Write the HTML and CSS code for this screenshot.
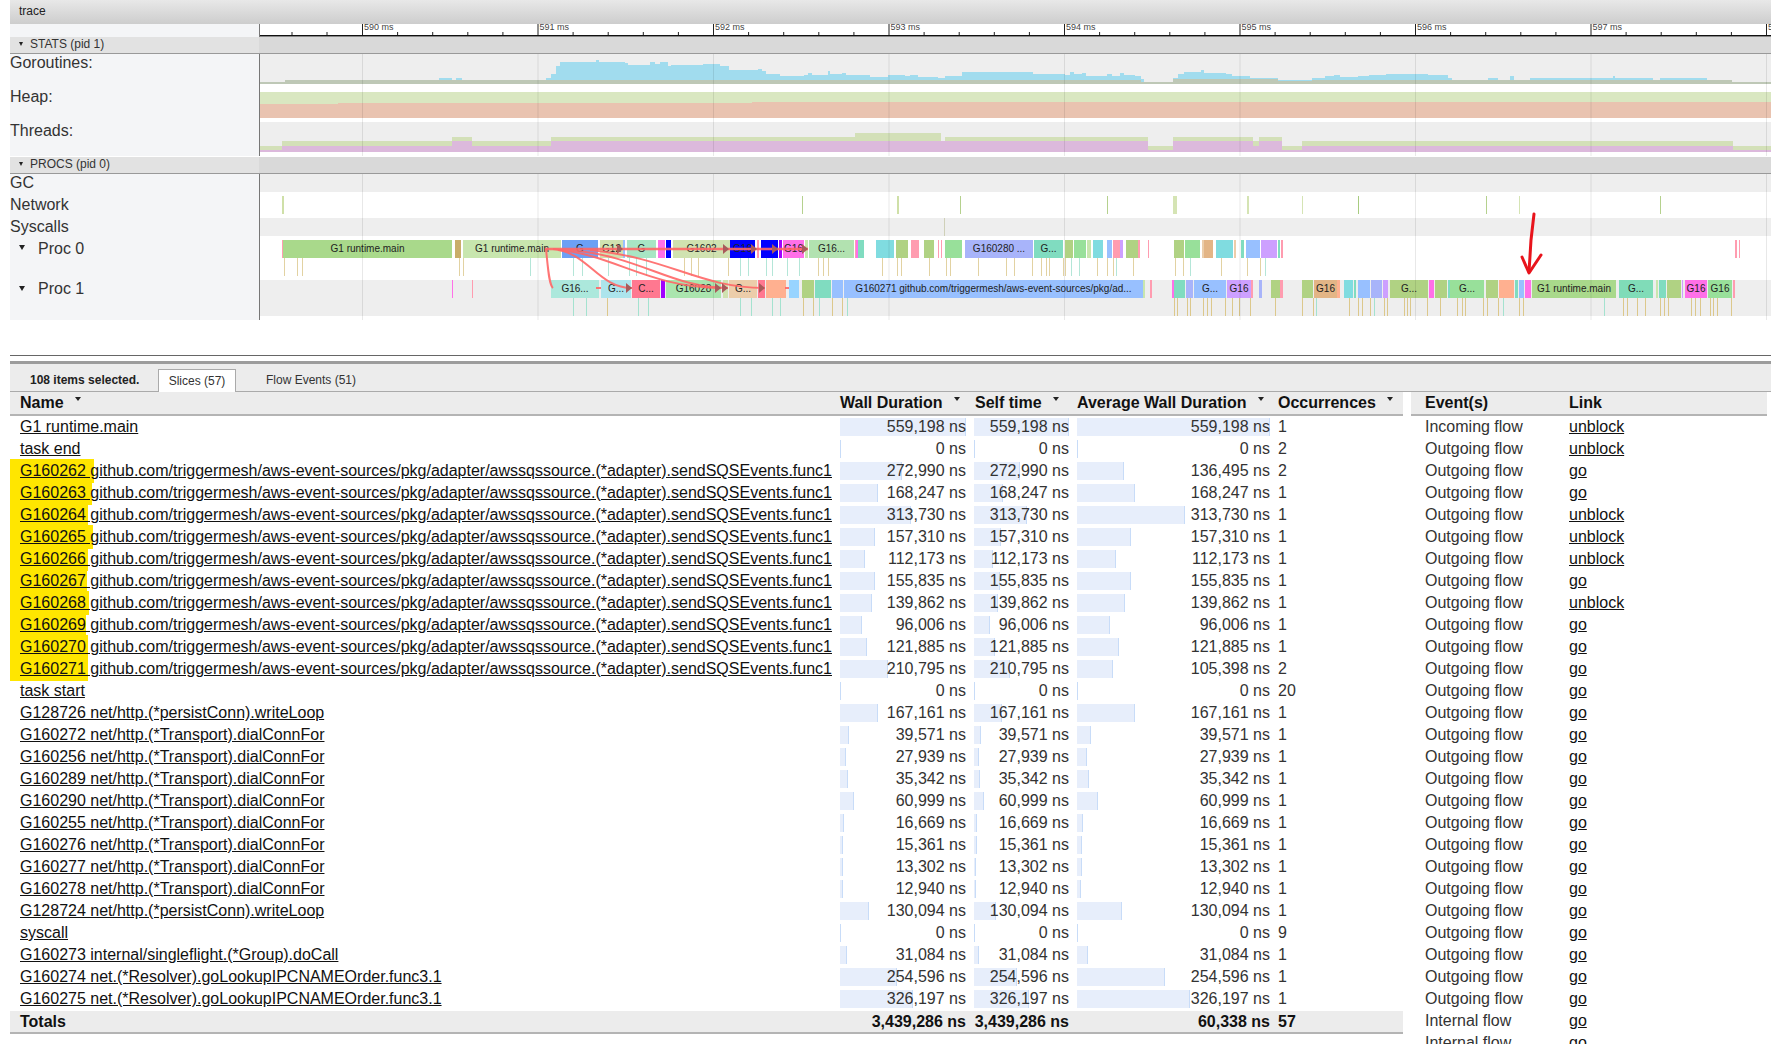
FILE: index.html

```html
<!DOCTYPE html>
<html lang="en">
<head>
  <meta charset="UTF-8">
  <title>trace</title>
  <link rel="stylesheet" href="styles.css">
</head>
<body>

  <div class="trace">
    <div class="title-bar">trace</div>

    <div class="track ruler">
      <div class="track-label"></div>
      <svg class="track-canvas" id="ruler" viewBox="260 24 1511 13"></svg>
    </div>

    <div class="group-head"><span class="arrow-small"></span>STATS (pid 1)</div>
    <div class="track goroutines">
      <div class="track-label">Goroutines:</div>
      <svg class="track-canvas" id="goroutines" viewBox="260 54 1511 38"></svg>
    </div>
    <div class="track heap">
      <div class="track-label">Heap:</div>
      <svg class="track-canvas" id="heap" viewBox="260 92 1511 30"></svg>
    </div>
    <div class="track threads">
      <div class="track-label">Threads:</div>
      <svg class="track-canvas" id="threads" viewBox="260 122 1511 34"></svg>
    </div>

    <div class="group-head procs"><span class="arrow-small"></span>PROCS (pid 0)</div>
    <div class="track gc">
      <div class="track-label">GC</div>
      <svg class="track-canvas" id="gc" viewBox="260 174 1511 18"></svg>
    </div>
    <div class="track network">
      <div class="track-label">Network</div>
      <svg class="track-canvas" id="network" viewBox="260 192 1511 26"></svg>
    </div>
    <div class="track syscalls">
      <div class="track-label">Syscalls</div>
      <svg class="track-canvas" id="syscalls" viewBox="260 218 1511 18"></svg>
    </div>
    <div class="track proc0">
      <div class="track-label proc-label"><span class="arrow"></span>Proc 0</div>
      <svg class="track-canvas" id="proc0" viewBox="260 236 1511 44"></svg>
    </div>
    <div class="track proc1">
      <div class="track-label proc-label"><span class="arrow"></span>Proc 1</div>
      <svg class="track-canvas" id="proc1" viewBox="260 280 1511 40"></svg>
    </div>

    <svg class="overlay" id="overlay" viewBox="0 0 1771 320"></svg>
  </div>

  <div class="divider"></div>

  <div class="details">
    <div class="tabs">
      <span class="selected-count">108 items selected.</span>
      <span class="tab active">Slices (57)</span>
      <span class="tab">Flow Events (51)</span>
    </div>

    <div class="tables">
      <table class="slices">
        <thead>
          <tr>
            <th class="name-col">Name<span class="sort"></span></th>
            <th class="wall-col">Wall Duration<span class="sort"></span></th>
            <th class="self-col">Self time<span class="sort"></span></th>
            <th class="avg-col">Average Wall Duration<span class="sort"></span></th>
            <th class="occ-col">Occurrences<span class="sort"></span></th>
          </tr>
        </thead>
        <tbody id="sliceRows"></tbody>
        <tfoot>
          <tr>
            <td class="name-col">Totals</td>
            <td class="num-total">3,439,286 ns</td>
            <td class="num-total">3,439,286 ns</td>
            <td class="num-total">60,338 ns</td>
            <td class="occ-col">57</td>
          </tr>
        </tfoot>
      </table>

      <table class="events">
        <thead>
          <tr>
            <th class="event-col">Event(s)</th>
            <th>Link</th>
          </tr>
        </thead>
        <tbody id="eventRows"></tbody>
      </table>
    </div>
  </div>

  <script src="script.js"></script>
</body>
</html>
```

FILE: styles.css

```css
html, body {
  height: 100%;
  margin: 0;
  padding: 0;
  overflow: hidden;
  font-family: "Liberation Sans", Arial, sans-serif;
  background: white;
  color: #222;
}

.trace {
  position: relative;
  height: 320px;
  margin-left: 10px;
}

.title-bar {
  height: 24px;
  padding-left: 9px;
  line-height: 23px;
  font-size: 12px;
  background: linear-gradient(#e8e8e8, #cdcdcd);
}

.track {
  display: flex;
}

.track-label {
  flex: none;
  width: 249px;
  background: #f4f5f7;
  border-right: 1px solid #777;
  font-size: 16px;
  line-height: 18px;
  color: #333;
}

.track-canvas {
  display: block;
  width: 1511px;
  height: 100%;
}

#ruler {
  overflow: visible;
}

.ruler { height: 13px; }
.goroutines { height: 38px; }
.heap { height: 30px; }
.threads { height: 34px; }
.gc { height: 18px; }
.network { height: 26px; }
.syscalls { height: 18px; }
.proc0 { height: 44px; }
.proc1 { height: 40px; }

.heap .track-label { line-height: 10px; }
.threads .track-label { line-height: 18px; }
.gc .track-label { line-height: 18px; }
.network .track-label { line-height: 26px; }
.syscalls .track-label { line-height: 18px; }

.proc-label {
  display: flex;
  align-items: flex-start;
  width: 240px;
  padding-left: 9px;
  line-height: 26px;
}

.proc1 .proc-label { line-height: 18px; }

.arrow {
  width: 0;
  height: 0;
  margin: 9px 13px 0 0;
  border-left: 3px solid transparent;
  border-right: 3px solid transparent;
  border-top: 5px solid #222;
}

.proc1 .arrow { margin-top: 6px; }

.group-head {
  display: flex;
  align-items: center;
  height: 14px;
  padding: 0 0 2px 9px;
  border-bottom: 1px solid #999;
  font-size: 12px;
  color: #333;
  background: linear-gradient(to right, #e2e2e2 249px, #d9d9d9 249px);
}

.procs {
  margin-top: 1px;
}

.arrow-small {
  width: 0;
  height: 0;
  margin-right: 7px;
  border-left: 2px solid transparent;
  border-right: 2px solid transparent;
  border-top: 4px solid #222;
}

.overlay {
  position: absolute;
  top: 0;
  left: -10px;
  width: 1771px;
  height: 320px;
  pointer-events: none;
}

.divider {
  height: 5px;
  margin: 35px 0 0 10px;
  border-top: 1px solid #666;
  border-bottom: 3px solid #9c9c9c;
}

.details {
  margin-left: 10px;
}

.tabs {
  display: flex;
  align-items: center;
  height: 27px;
  background: #ececec;
  border-bottom: 1px solid #aaa;
  font-size: 12px;
}

.selected-count {
  width: 128px;
  padding-left: 20px;
  padding-top: 4px;
  font-weight: bold;
}

.tab {
  padding-top: 4px;
  color: #333;
  white-space: nowrap;
}

.tab.active {
  align-self: flex-end;
  width: 76px;
  height: 22px;
  margin: 0 30px -1px 0;
  padding: 0;
  line-height: 23px;
  text-align: center;
  background: white;
  border: 1px solid #aaa;
  border-bottom: none;
}

.tables {
  display: flex;
  gap: 8px;
  align-items: flex-start;
}

table {
  border-collapse: collapse;
  table-layout: fixed;
  font-size: 16px;
}

.slices { width: 1393px; }
.events { width: 356px; }

th {
  height: 22px;
  padding: 0;
  text-align: left;
  background: #ececec;
  border-bottom: 2px solid #b4b4b4;
  color: #111;
}

td {
  height: 22px;
  padding: 0;
  white-space: nowrap;
  color: #333;
}

td a {
  color: #111;
}

.name-col { width: 820px; padding-left: 10px; }
.wall-col { width: 134px; }
.self-col { width: 102px; padding-left: 1px; }
.avg-col { width: 201px; }
.occ-col { width: 125px; }

.event-col { width: 144px; padding-left: 14px; }
.event-cell { padding-left: 14px; }

.sort {
  display: inline-block;
  width: 0;
  height: 0;
  margin-left: 11px;
  border-left: 3px solid transparent;
  border-right: 3px solid transparent;
  border-top: 4px solid #222;
  vertical-align: 7px;
}

.num {
  position: relative;
  height: 22px;
  line-height: 22px;
  margin-right: 8px;
  text-align: right;
}

.bar {
  position: absolute;
  top: 2px;
  left: 0;
  height: 18px;
  box-sizing: border-box;
  background: #e7eefb;
  border-right: 1px solid #c8dcf8;
}

.num-text {
  position: relative;
}

.marked {
  position: relative;
}

.mark {
  position: absolute;
  top: -1px;
  left: 0;
  height: 24px;
  background: #ffe600;
}

.name-link {
  position: relative;
}

tfoot td {
  height: 21px;
  font-weight: bold;
  color: #111;
  background: #ececec;
  border-top: 1px solid white;
  border-bottom: 2px solid #b4b4b4;
}

.num-total {
  padding-right: 8px;
  text-align: right;
}
```

FILE: script.js

```js
const GRID = [362, 537.5, 713, 888.5, 1064, 1239.5, 1415, 1590.5, 1766];

const OLIVE = "#b0d283", GREEN = "#98e09a", MAIN = "#a9d98b", PALE = "#c8e6ae", SAGE = "#d0e2b0";
const BLUE = "#98c0ff", INDIGO = "#a8b4fa", LILAC = "#cda0ff", PURE = "#0000ff", ROYAL = "#6ca0f5";
const CYAN = "#80dce0", TEAL = "#80dcc0", MINT = "#a8e5c4", PINK = "#ff9cb0", MAGENTA = "#ff70e8";
const ROSE = "#ff7890", SALMON = "#ffb090", ORANGE = "#e3b586", SAND = "#eccdaa", VIOLET = "#a000ff";

const proc0Slices = [
  [282, 283, PINK], [283, 452, MAIN, "G1 runtime.main"], [455, 461, "#c9ad6a"], [463, 561, PALE, "G1 runtime.main"],
  [562, 598, ROYAL, "G"], [600, 623, SAGE, "G12"], [623, 625, BLUE], [627, 656, MINT, "G"], [658, 665, MAGENTA],
  [666, 671, PURE], [673, 730, SAGE, "G1602"], [730, 755, PURE, "G16"], [757, 759, PINK], [761, 778, PURE],
  [779, 782, VIOLET], [783, 804, MAGENTA, "G16"], [805, 808, PALE], [809, 854, "#b2e2b0", "G16..."], [855, 856, PINK],
  [856, 858, MAGENTA], [858, 864, TEAL], [876, 894, CYAN], [896, 908, OLIVE], [911, 919, PINK], [924, 934, OLIVE],
  [938, 939, PINK], [941, 942, PINK], [945, 962, GREEN], [965, 1033, INDIGO, "G160280 ..."], [1034, 1063, TEAL, "G..."],
  [1065, 1073, OLIVE], [1074, 1086, GREEN], [1087, 1091, PALE], [1093, 1103, CYAN], [1107, 1112, BLUE], [1113, 1120, PINK],
  [1120, 1123, LILAC], [1126, 1138, OLIVE], [1138, 1140, PINK], [1148, 1149, PINK], [1174, 1184, OLIVE], [1185, 1200, GREEN],
  [1202, 1204, SAND], [1204, 1213, ORANGE], [1216, 1233, CYAN], [1234, 1236, SAND], [1241, 1244, TEAL], [1246, 1260, BLUE],
  [1261, 1277, LILAC], [1278, 1280, TEAL], [1281, 1283, PINK], [1735, 1737, PINK], [1739, 1740, PINK]
];

const proc1Slices = [
  [452, 453, MAGENTA], [472, 473, PINK], [551, 599, "#ace8dc", "G16..."], [601, 631, "#ace4ec", "G..."], [632, 660, ROSE, "C..."],
  [661, 665, VIOLET], [666, 721, "#aae5ae", "G16028"], [723, 728, SAGE], [729, 757, SAND, "G..."], [758, 765, ROSE],
  [766, 786, SALMON], [789, 799, "#98d4ff"], [802, 814, OLIVE], [815, 831, TEAL], [832, 843, BLUE],
  [844, 1143, BLUE, "G160271 github.com/triggermesh/aws-event-sources/pkg/ad..."], [1143, 1145, PALE], [1150, 1152, PINK],
  [1172, 1174, MAGENTA], [1174, 1185, TEAL], [1186, 1193, INDIGO], [1194, 1226, BLUE, "G..."], [1227, 1251, LILAC, "G16"],
  [1251, 1253, PINK], [1259, 1262, INDIGO], [1271, 1280, OLIVE], [1280, 1283, PINK], [1302, 1313, OLIVE], [1314, 1337, ORANGE, "G16"],
  [1337, 1340, SALMON], [1344, 1353, CYAN], [1354, 1356, TEAL], [1358, 1370, BLUE], [1371, 1382, INDIGO], [1383, 1388, LILAC],
  [1390, 1428, OLIVE, "G..."], [1429, 1434, MAGENTA], [1435, 1447, OLIVE], [1448, 1450, TEAL], [1450, 1484, GREEN, "G..."],
  [1486, 1498, OLIVE], [1499, 1514, SALMON], [1515, 1518, TEAL], [1519, 1524, BLUE], [1525, 1531, MAGENTA], [1532, 1616, MAIN, "G1 runtime.main"],
  [1619, 1653, "#80dcb8", "G..."], [1656, 1658, PALE], [1659, 1666, TEAL], [1667, 1681, OLIVE], [1682, 1683, LILAC],
  [1685, 1707, MAGENTA, "G16"], [1708, 1732, GREEN, "G16"], [1733, 1735, PINK]
];

// tan ticks first, teal ones second
const proc0TicksTan = [284, 297, 302, 459, 463, 684, 691, 698, 728, 818, 823, 828, 882, 897, 901, 929, 946, 950, 978, 1006, 1014, 1032, 1041, 1046, 1049, 1063, 1065, 1097, 1107, 1113, 1133, 1175, 1183, 1221, 1247, 1260];
const proc0TicksTeal = [530, 573, 582, 608, 629, 636, 646, 740, 748, 766, 772, 787, 799, 1071, 1079, 1116, 1190, 1265];
const proc1TicksTan = [607, 803, 813, 832, 842, 1174, 1177, 1187, 1190, 1203, 1207, 1211, 1225, 1232, 1239, 1250, 1275, 1302, 1313, 1349, 1358, 1362, 1370, 1384, 1387, 1404, 1407, 1410, 1427, 1440, 1457, 1462, 1465, 1483, 1487, 1498, 1519, 1523, 1623, 1627, 1637, 1645, 1660, 1664, 1668, 1691, 1695, 1700, 1710, 1713, 1717, 1731];
const proc1TicksTeal = [573, 586, 638, 648, 740, 751, 772, 780, 819, 847, 1316, 1374, 1503, 1604];

const blueSteps = [[260, 82], [439, 78], [452, 80], [456, 78], [462, 80], [546, 78], [551, 74], [556, 66], [560, 62], [596, 60], [599, 62], [625, 63], [628, 65], [650, 62], [655, 64], [660, 62], [668, 66], [671, 65], [703, 64], [720, 66], [729, 70], [758, 69], [762, 71], [766, 74], [780, 76], [804, 75], [808, 73], [812, 75], [828, 71], [830, 74], [842, 73], [846, 75], [860, 75], [870, 77], [888, 75], [905, 76], [910, 75], [918, 77], [938, 78], [945, 76], [962, 72], [1033, 74], [1065, 75], [1070, 72], [1074, 74], [1082, 73], [1086, 76], [1107, 74], [1112, 76], [1120, 73], [1124, 75], [1135, 76], [1141, 79], [1144, 82], [1173, 78], [1178, 74], [1184, 72], [1201, 70], [1204, 73], [1226, 74], [1232, 76], [1250, 78], [1278, 80], [1312, 78], [1325, 76], [1334, 75], [1340, 77], [1358, 76], [1369, 75], [1386, 74], [1428, 75], [1448, 78], [1452, 80], [1488, 78], [1498, 80], [1510, 76], [1514, 80], [1530, 78], [1613, 76], [1615, 78], [1653, 80], [1660, 78], [1704, 78], [1707, 80], [1732, 82]];
const oliveSteps = [[260, 82], [285, 80], [1141, 82], [1173, 79], [1278, 81], [1312, 80], [1732, 82]];
const heapGreen = [[260, 92]];
const heapOrange = [[260, 104], [338, 103], [752, 102]];
const threadsGreen = [[260, 146], [282, 141], [452, 137], [472, 141], [551, 137], [855, 133], [941, 141], [945, 137], [1148, 146], [1173, 137], [1253, 141], [1259, 137], [1282, 146], [1302, 141], [1733, 146]];
const threadsPurple = [[260, 150], [282, 146], [452, 141], [472, 146], [551, 141], [1148, 150], [1173, 141], [1253, 146], [1259, 141], [1282, 150], [1302, 146], [1733, 150]];

// [x, width, color]
const networkTicks = [[282, 2, "#cfe0a8"], [802, 1, "#b5d18e"], [897, 2, "#cfe0a8"], [960, 1, "#b5d18e"], [1107, 1, "#b5d18e"], [1173, 4, "#d5e4b4"], [1247, 2, "#d5e4b4"], [1302, 1, "#d5e4b4"], [1358, 1, "#a8cc80"], [1486, 1, "#b5d18e"], [1519, 1, "#d5e4b4"], [1660, 1, "#b5d18e"]];

function rect(x, y, w, h, fill) {
  return `<rect x="${x}" y="${y}" width="${w}" height="${h}" fill="${fill}"/>`;
}

function stepPath(steps, base, fill) {
  let d = `M${steps[0][0]} ${base}`;
  steps.forEach((s, i) => {
    const next = i + 1 < steps.length ? steps[i + 1][0] : 1771;
    d += `L${s[0]} ${s[1]}L${next} ${s[1]}`;
  });
  return `<path d="${d}L1771 ${base}Z" fill="${fill}"/>`;
}

function gridLines(y, h) {
  return GRID.map(x => rect(x, y, 1, h, "rgba(0,0,0,0.09)")).join("");
}

function drawSlices(slices, y) {
  return slices.map(s => {
    let out = rect(s[0], y, s[1] - s[0], 18, s[2]);
    if (s[3]) {
      out += `<text x="${(s[0] + s[1]) / 2}" y="${y + 12}" text-anchor="middle" font-size="10" fill="#222">${s[3]}</text>`;
    }
    return out;
  }).join("");
}

function ticks(list, y, color) {
  return list.map(x => rect(x, y, 1, 18, color)).join("");
}

function setTrack(id, inner) {
  document.getElementById(id).innerHTML = inner;
}

// ruler
let rulerSvg = rect(291.5, 32, 1, 3, "#222") + rect(326.5, 32, 1, 3, "#222");
GRID.forEach((x, i) => {
  rulerSvg += rect(x, 24, 1, 11, "#222");
  rulerSvg += `<text x="${x + 2}" y="30" font-size="9" fill="#444">${590 + i} ms</text>`;
  for (let m = 1; m <= 4; m++) {
    rulerSvg += rect(x + m * 35.1, 32, 1, 3, "#222");
  }
});
rulerSvg += rect(260, 35, 1511, 1.5, "#111");
setTrack("ruler", rulerSvg);

setTrack("goroutines", rect(260, 54, 1511, 30, "#eeeeee") + stepPath(blueSteps, 84, "#a1dcee") + stepPath(oliveSteps, 84, "#bec8b6") + gridLines(54, 38));
setTrack("heap", stepPath(heapGreen, 118, "#d9e7c1") + stepPath(heapOrange, 118, "#e9c3b0") + gridLines(92, 30));
setTrack("threads", rect(260, 122, 1511, 30, "#eeeeee") + stepPath(threadsGreen, 152, "#d3e0b8") + stepPath(threadsPurple, 152, "#dcb9dc") + gridLines(122, 34));
setTrack("gc", rect(260, 174, 1511, 18, "#eeeeee") + gridLines(174, 18));
setTrack("network", networkTicks.map(t => rect(t[0], 196, t[1], 18, t[2])).join("") + gridLines(192, 26));
setTrack("syscalls", rect(260, 218, 1511, 18, "#eeeeee") + rect(944, 218, 1, 18, "#cfd0b8") + gridLines(218, 18));
setTrack("proc0", drawSlices(proc0Slices, 240) + ticks(proc0TicksTan, 258, "#e2d2a2") + ticks(proc0TicksTeal, 258, "#b4e6d8") + gridLines(236, 44));
setTrack("proc1", rect(260, 280, 1511, 36, "#eeeeee") + drawSlices(proc1Slices, 280) + ticks(proc1TicksTan, 298, "#dcc88c") + ticks(proc1TicksTeal, 298, "#a4e2cf") + gridLines(280, 40));

// flow arrows and the hand drawn red arrow
function head(x, y) {
  return `<path d="M${x - 6} ${y - 5}L${x} ${y}L${x - 6} ${y + 5}Z" fill="#a85a5a"/>`;
}
const flow = [
  "M545 249L808 249",
  "M546 249C548 268 549 285 553 288",
  "M553 249C588 252 598 288 632 288",
  "M558 250C612 254 650 288 721 288",
  "M570 250C640 256 672 288 728 288",
  "M590 250C670 258 700 288 765 288",
  "M596 288L601 288",
  "M785 288L789 288"
];
let overlaySvg = flow.map((d, i) => `<path d="${d}" fill="none" stroke="#ff6666" stroke-width="${i === 0 ? 2.5 : 2}" opacity="0.9"/>`).join("");
[[623, 249], [729, 249], [757, 249], [778, 249], [808, 249], [632, 288], [721, 288], [728, 288], [765, 288]].forEach(p => {
  overlaySvg += head(p[0], p[1]);
});
overlaySvg += `<path d="M1534 214L1531 240L1529 272" fill="none" stroke="#e8141c" stroke-width="3" stroke-linecap="round"/>`;
overlaySvg += `<path d="M1522 257L1529 273L1541 255" fill="none" stroke="#e8141c" stroke-width="3" stroke-linecap="round" stroke-linejoin="round"/>`;
setTrack("overlay", overlaySvg);

// details tables
const SQS = "github.com/triggermesh/aws-event-sources/pkg/adapter/awssqssource.(*adapter).sendSQSEvents.func1";
const rows = [
  ["G1 runtime.main", 559198, 559198, 559198, 1],
  ["task end", 0, 0, 0, 2],
  ["G160262 " + SQS, 272990, 272990, 136495, 2, 84],
  ["G160263 " + SQS, 168247, 168247, 168247, 1, 82],
  ["G160264 " + SQS, 313730, 313730, 313730, 1, 78],
  ["G160265 " + SQS, 157310, 157310, 157310, 1, 83],
  ["G160266 " + SQS, 112173, 112173, 112173, 1, 78],
  ["G160267 " + SQS, 155835, 155835, 155835, 1, 77],
  ["G160268 " + SQS, 139862, 139862, 139862, 1, 79],
  ["G160269 " + SQS, 96006, 96006, 96006, 1, 76],
  ["G160270 " + SQS, 121885, 121885, 121885, 1, 78],
  ["G160271 " + SQS, 210795, 210795, 105398, 2, 78],
  ["task start", 0, 0, 0, 20],
  ["G128726 net/http.(*persistConn).writeLoop", 167161, 167161, 167161, 1],
  ["G160272 net/http.(*Transport).dialConnFor", 39571, 39571, 39571, 1],
  ["G160256 net/http.(*Transport).dialConnFor", 27939, 27939, 27939, 1],
  ["G160289 net/http.(*Transport).dialConnFor", 35342, 35342, 35342, 1],
  ["G160290 net/http.(*Transport).dialConnFor", 60999, 60999, 60999, 1],
  ["G160255 net/http.(*Transport).dialConnFor", 16669, 16669, 16669, 1],
  ["G160276 net/http.(*Transport).dialConnFor", 15361, 15361, 15361, 1],
  ["G160277 net/http.(*Transport).dialConnFor", 13302, 13302, 13302, 1],
  ["G160278 net/http.(*Transport).dialConnFor", 12940, 12940, 12940, 1],
  ["G128724 net/http.(*persistConn).writeLoop", 130094, 130094, 130094, 1],
  ["syscall", 0, 0, 0, 9],
  ["G160273 internal/singleflight.(*Group).doCall", 31084, 31084, 31084, 1],
  ["G160274 net.(*Resolver).goLookupIPCNAMEOrder.func3.1", 254596, 254596, 254596, 1],
  ["G160275 net.(*Resolver).goLookupIPCNAMEOrder.func3.1", 326197, 326197, 326197, 1]
];

const MAX = 559198;

function numCell(value) {
  const pct = (value / MAX * 100).toFixed(2);
  return `<td><div class="num"><span class="bar" style="width:${value ? pct + "%" : "1px"}"></span><span class="num-text">${value.toLocaleString("en-US")} ns</span></div></td>`;
}

document.getElementById("sliceRows").innerHTML = rows.map(r => {
  const mark = r[5] ? `<span class="mark" style="width:${r[5]}px"></span>` : "";
  return `<tr>
    <td class="name-col${r[5] ? " marked" : ""}">${mark}<a class="name-link" href="#">${r[0]}</a></td>
    ${numCell(r[1])}${numCell(r[2])}${numCell(r[3])}
    <td>${r[4]}</td>
  </tr>`;
}).join("");

const links = ["unblock", "unblock", "go", "go", "unblock", "unblock", "unblock", "go", "unblock", "go", "go", "go", "go", "go", "go", "go", "go", "go", "go", "go", "go", "go", "go", "go", "go", "go", "go", "go", "go"];

document.getElementById("eventRows").innerHTML = links.map((link, i) => {
  const label = i === 0 ? "Incoming flow" : i >= 27 ? "Internal flow" : "Outgoing flow";
  return `<tr><td class="event-cell">${label}</td><td><a href="#">${link}</a></td></tr>`;
}).join("");
```
